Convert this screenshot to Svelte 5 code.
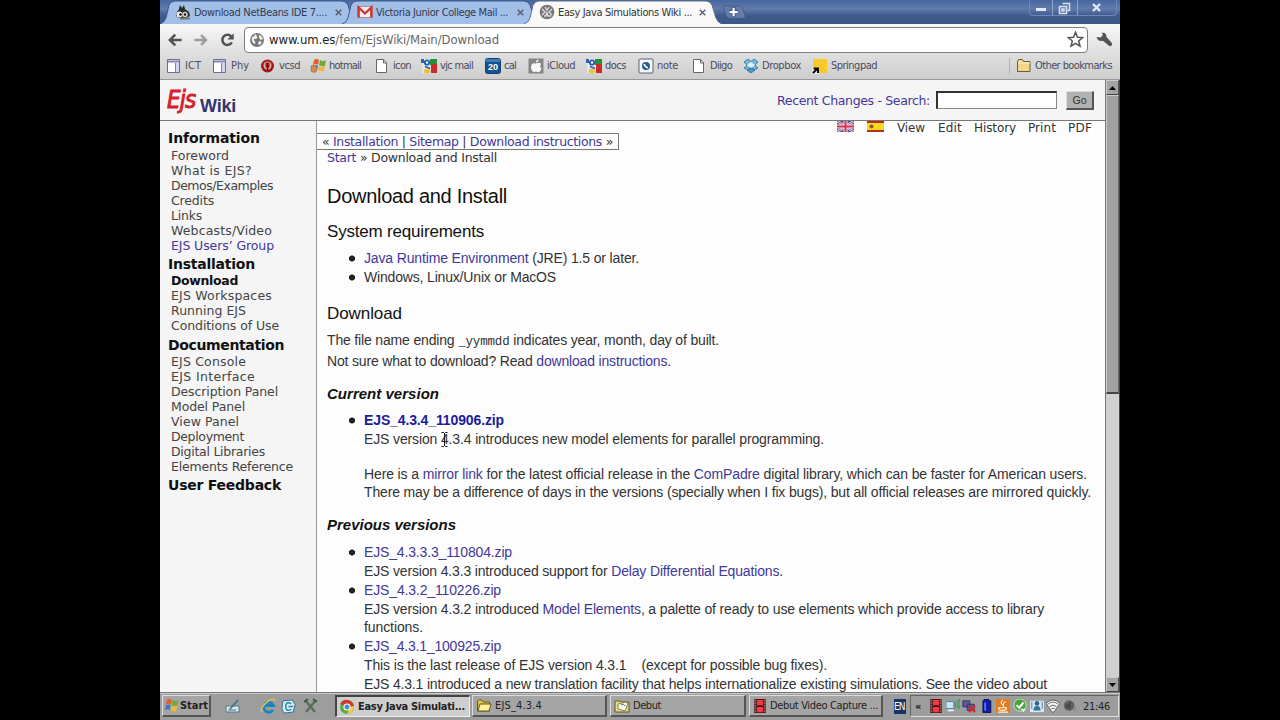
<script>
  // Sets letter-spacing so that a run of text takes up the given width.
  function fit(node, width) {
    const natural = node.getBoundingClientRect().width;
    node.style.letterSpacing = `${(width - natural) / node.textContent.length}px`;
  }

  const tabs = [
    { icon: 'duke', label: 'Download NetBeans IDE 7....', width: 133 },
    { icon: 'gmail', label: 'Victoria Junior College Mail ...', width: 132 },
    { icon: 'sim', label: 'Easy Java Simulations Wiki ...', width: 134, active: true }
  ];

  const bookmarks = [
    { icon: 'page', label: 'ICT', slot: 46, width: 16 },
    { icon: 'page', label: 'Phy', slot: 48, width: 18 },
    { icon: 'crest', label: 'vcsd', slot: 50, width: 21 },
    { icon: 'hotmail', label: 'hotmail', slot: 64, width: 32 },
    { icon: 'file', label: 'icon', slot: 47, width: 18 },
    { icon: 'google', label: 'vjc mail', slot: 64, width: 33 },
    { icon: 'cal', label: 'cal', slot: 43, width: 12 },
    { icon: 'apple', label: 'iCloud', slot: 58, width: 28 },
    { icon: 'google', label: 'docs', slot: 52, width: 21 },
    { icon: 'note', label: 'note', slot: 53, width: 21 },
    { icon: 'file', label: 'Diigo', slot: 52, width: 22 },
    { icon: 'dropbox', label: 'Dropbox', slot: 69, width: 39 },
    { icon: 'spring', label: 'Springpad', slot: 80, width: 46 }
  ];

  const menu = [
    { title: 'Information', width: 92, items: [['Foreword', 58], ['What is EJS?', 81], ['Demos/Examples', 102], ['Credits', 43], ['Links', 31], ['Webcasts/Video', 101], ['EJS Users’ Group', 103, 'blue']] },
    { title: 'Installation', width: 87, items: [['Download', 67, 'current'], ['EJS Workspaces', 101], ['Running EJS', 75], ['Conditions of Use', 108]] },
    { title: 'Documentation', width: 116, items: [['EJS Console', 75], ['EJS Interface', 84], ['Description Panel', 107], ['Model Panel', 74], ['View Panel', 68], ['Deployment', 73], ['Digital Libraries', 94], ['Elements Reference', 122]] },
    { title: 'User Feedback', width: 113, items: [] }
  ];

  const actions = [['View', 28, 41], ['Edit', 24, 36], ['History', 42, 54], ['Print', 28, 40], ['PDF', 24, 24]];
  const tray = ['film', 'signal', 'offline', 'battery', 'java', 'shield', 'people', 'wifi', 'speaker'];
</script>

{#snippet icon(name, size = 16)}
  <svg class="icon" width={size} height={size} viewBox="0 0 16 16">
    {#if name === 'duke'}
      <path d="M2 8 4 5l1-4 2 3 2-3 1 4 4 3 1 4-4 2H4L1 12z" fill="#2b2b28" />
      <circle cx="4.500" cy="10.500" r="3" fill="#eee" /><circle cx="10" cy="10.500" r="2.700" fill="#ddd" />
      <circle cx="5.500" cy="10.500" r="1.300" fill="#111" /><circle cx="10" cy="10.500" r="1.200" fill="#111" />
      <path d="M5 14.500h10" stroke="#77756b" stroke-width="2" />
    {:else if name === 'gmail'}
      <path d="M.5 2.500h15v11H.5z" fill="#f5eeee" stroke="#ad8c8c" />
      <path d="M1.700 13.500V3.500L8 9.500l6.300-6v10" fill="none" stroke="#cf3434" stroke-width="2.300" />
    {:else if name === 'globe'}
      <circle cx="8" cy="8" r="7" fill="#777" />
      <path d="M3 5c2 0 2-2 4-3 0 2 2 2 1 4S4 6 5 8s2 2 1 4c-2 0-4-3-3-7zM10 3c2 0 3 2 4 4l-2 1-2-2zM10 9l3 1-2 3-2-1z" fill="#eee" />
    {:else if name === 'sim'}
      <circle cx="8" cy="8" r="7.300" fill="#777" />
      <path d="M3 5l3 3-3 3M13 5l-3 3 3 3M6 3l2 3 2-3M5 12h2l1-4 1 4h3" fill="none" stroke="#ddd" stroke-width="1.300" />
    {:else if name === 'page'}
      <path d="M1.500 1.500h12v13h-12z" fill="#fff" stroke="#6a6e94" />
      <path d="M2 3.500h11" stroke="#8385b0" stroke-width="2" />
      <path d="M9.500 5v9" stroke="#7e80ab" />
      <path d="M10 5h3v9h-3z" fill="#d3d3f3" />
    {:else if name === 'crest'}
      <circle cx="7.500" cy="8" r="6.500" fill="#a5161a" /><circle cx="7.500" cy="7.500" r="4" fill="#d9aca0" />
      <path d="M5.500 4.500h4v4l-2 3-2-3z" fill="#a5161a" /><path d="M7.500 5v8" stroke="#222" />
    {:else if name === 'windows'}
      <path d="M3 2q3-2 5 0L7 7Q5 5 2 7z" fill="#e65c2b" /><path d="M9 2q3 2 6 0l-1 6q-3 1-6-1z" fill="#72a93a" />
      <path d="M2 8q3-2 5 0l-1 5q-2-2-5 0z" fill="#3f79c4" /><path d="M8 8q3 2 6 0l-1 6q-3 1-6-1z" fill="#f0b934" />
    {:else if name === 'hotmail'}
      <path d="M4 2q3-2 5 0L8 7Q6 5 3 7z" fill="#e65c2b" /><path d="M10 2q3 2 6 0l-1 6q-3 1-6-1z" fill="#72a93a" />
      <path d="M3 8q3-2 5 0l-1 4q-2-2-5 0z" fill="#3f79c4" /><path d="M9 8q3 2 6 0l-1 5q-3 1-6-1z" fill="#f0b934" />
      <path d="M1 8q4-2 6 2l-1 4q-3 1-5-1z" fill="#d98a46" stroke="#8f684e" stroke-width=".6" />
    {:else if name === 'file'}
      <path d="M2.500 1.500h7l3 3.500v9.500h-10z" fill="#fff" stroke="#666" /><path d="M9.500 1.500V5h3" fill="none" stroke="#666" />
    {:else if name === 'google'}
      <path d="M1 1h14v14H1z" fill="#e8e8e8" /><path d="M9 1h7v6H9z" fill="#23913b" /><path d="M10 6h6v9h-6z" fill="#cc2b2b" />
      <path d="M0 1h3v4H0z" fill="#2e62b3" /><circle cx="6" cy="4.500" r="2.200" fill="#fff" stroke="#235aab" stroke-width="1.800" />
      <path d="M4 8.500l5 2" stroke="#245cb0" stroke-width="1.800" /><ellipse cx="6" cy="13" rx="3.500" ry="2.200" fill="#eac343" />
    {:else if name === 'cal'}
      <rect x=".5" y=".5" width="15" height="15" rx="2" fill="#17528f" stroke="#123f70" />
      <path d="M1 1h14v3H1z" fill="#3a7db9" /><text x="3" y="12" class="cal-day">20</text>
    {:else if name === 'apple'}
      <path d="M.5.500h15v15H.5z" fill="#858585" />
      <path d="M8 5.500q5-2 5 1-2 2 .5 4-2 5-4 3.500-2-1-3 0-3 0-3.500-4.500 0-5.500 5-4zM8 4.500q0-3 2.500-3 0 3-2.500 3z" fill="#f7f7f7" />
    {:else if name === 'note'}
      <rect x="1" y="1" width="14" height="14" rx="1" fill="#f6f8fb" stroke="#59626f" />
      <circle cx="8" cy="8" r="4" fill="#245c94" /><path d="M6 6q1 3 4 4" stroke="#fff" stroke-width="1.800" fill="none" />
    {:else if name === 'dropbox'}
      <path d="M1 4l4-3 3 2.500L11 1l4 3-3 3 3 3-4 2-3-2-3 2-4-2 3-3z" fill="#78b5dc" stroke="#28709e" stroke-width=".8" />
      <path d="M4 7l4-3 4 3-4 3z" fill="#e4f3fb" /><path d="M4 12l4 3 4-3-4-2z" fill="#4c96c8" stroke="#28709e" stroke-width=".8" />
    {:else if name === 'spring'}
      <path d="M1 1h14v14H1z" fill="#f9ca27" /><path d="M0 9.500h7V16H0z" fill="#eee" />
      <path d="M1 15l4-4M1.500 10.500h4.500v4.500" stroke="#000" stroke-width="2" fill="none" />
    {:else if name === 'folder'}
      <path d="M1.500 3.500l1-2h4l1 2h6.500v10H1.500z" fill="#f5d48b" stroke="#6d5b39" /><path d="M2 5h12" stroke="#fff0c5" />
    {:else if name === 'star'}
      <path d="M8 1.200l1.900 4.700 4.900.3-3.800 3.200 1.300 4.900L8 11.600l-4.300 2.700L5 9.400 1.200 6.200l4.900-.3z" fill="#fff" stroke="#555" stroke-width="1.400" />
    {:else if name === 'wrench'}
      <path d="M.5 5l4 .5L7 3 5.500.8Q10.500 0 10.500 5l4.500 5q2 2 .5 3.500-1.500 1.500-3.500-.5L7 8.800Q2 10 .5 5z" fill="#505459" />
    {:else if name === 'yellowfolder'}
      <path d="M1.500 3l2-1.500 3 1 1 1.500h6v9h-12z" fill="#d9c44c" stroke="#65591e" /><path d="M2 13l2-7h11l-2 7z" fill="#fff19a" stroke="#65591e" />
    {:else if name === 'debut'}
      <path d="M1 3h5l1 1h8v10H1z" fill="#eadc8a" stroke="#62551d" /><path d="M4 6l8-2 2 2-3 7-7-2z" fill="#f4f6ee" stroke="#85824c" /><path d="M7 7q3-2 4 1" fill="none" stroke="#4d785f" />
    {:else if name === 'film'}
      <path d="M1.500 0h13v16h-13z" fill="#4a1717" /><path d="M4.500 1h7v6h-7zM4.500 9h7v6h-7z" fill="#ee3b43" />
      <path d="M3 1v15M13 1v15" stroke="#e9a9a9" stroke-dasharray="1.500 1.500" />
    {:else if name === 'chrome'}
      <circle cx="8" cy="8" r="7" fill="#58ab46" /><path d="M1 5Q4 0 9 1q5 1 6 6H8z" fill="#cf3a2e" />
      <path d="M15 7q0 7-7 8l3-7z" fill="#f3cf3c" /><circle cx="8" cy="8" r="3.600" fill="#fff" /><circle cx="8" cy="8" r="2.500" fill="#4b8bd1" />
    {:else if name === 'desktop'}
      <path d="M1 8h13v6H1z" fill="#d9e9ed" stroke="#557886" /><path d="M5 11l8-9" stroke="#436a7d" stroke-width="1.500" /><path d="M3 12h8" stroke="#3c6c89" />
    {:else if name === 'ie'}
      <path d="M13 12A5 5 0 1 1 13.500 7.500H5" fill="none" stroke="#1d83bd" stroke-width="2.800" /><path d="M2 14C-2 9 14-3 15 3" fill="none" stroke="#e3c24d" stroke-width="1.300" />
    {:else if name === 'outlook'}
      <path d="M2 2l10-1 3 5-2 8-10 1-2-5z" fill="#d8edf3" stroke="#366c88" /><path d="M11 5Q5 2 5 8t6 3M8 8h5" fill="none" stroke="#2789b4" stroke-width="1.600" />
    {:else if name === 'tools'}
      <path d="M2 2l10 12M13 2L3 14" stroke="#58715d" stroke-width="2.600" /><path d="M1 4l4-3M10 1l4 3" stroke="#435847" stroke-width="1.600" />
    {:else if name === 'signal'}
      <rect x="0" y="3" width="9" height="8" fill="#cbe6ee" stroke="#467b9a" /><path d="M2 13h7" stroke="#e5f4f5" stroke-width="2" />
      <path d="M10 4q2 2 0 5M12 2q4 4 0 8M14 0q5 6 0 11" stroke="#3a9b54" fill="none" stroke-width="1.400" />
    {:else if name === 'offline'}
      <path d="M1 2h8v7H1zM6 6h8v7H6z" fill="#5a5b9a" stroke="#333461" /><path d="M8 8l7 7M15 8l-7 7" stroke="#dc2727" stroke-width="2.400" />
    {:else if name === 'battery'}
      <path d="M6 0h5v2h2.500v13.500h-9V2H6z" fill="#121ab0" stroke="#070b4e" /><path d="M7 4v9" stroke="#4e83ed" stroke-width="2" />
    {:else if name === 'java'}
      <path d="M0 0h16v16H0z" fill="#e37b22" /><path d="M8 1Q4 4 7 6t1 3M11 3Q7 5 9 8M3 10h9q0 3-3 3H6q-3 0-3-3zM2 15h12" stroke="#fff1d9" fill="none" stroke-width="1.200" />
    {:else if name === 'shield'}
      <circle cx="8" cy="7" r="7" fill="#46a53b" stroke="#d6edca" /><path d="M4 7l3 3 5-6" fill="none" stroke="#fff" stroke-width="2.300" /><path d="M8 11h7l-3 4z" fill="#e8edf0" />
    {:else if name === 'people'}
      <path d="M0 2h16v13H0z" fill="#d5e7f1" /><circle cx="8" cy="5" r="2.600" fill="#2f6387" /><path d="M4 13q0-5 4-5t4 5z" fill="#3c7197" /><path d="M2 3v8M14 3v8" stroke="#6d9bbb" stroke-width="1.500" />
    {:else if name === 'wifi'}
      <path d="M0 5q8-8 16 0L9 15H7z" fill="#f4f4f4" stroke="#555" /><path d="M2 6q6-5 12 0M4 8.500q4-3 8 0M6 11q2-1 4 0" fill="none" stroke="#555" />
    {:else if name === 'speaker'}
      <circle cx="7" cy="7.500" r="6" fill="#606060" /><path d="M3 6h3l3-3v9L6 10H3z" fill="#484848" /><path d="M12 8q4 2 1 6" fill="none" stroke="#777" />
    {/if}
  </svg>
{/snippet}

<div class="stage">
  <div class="screen">
    <div class="tabstrip">
      {#each tabs as tab}
        <div class="tab" class:active={tab.active}>
          <svg class="tab-shape" viewBox="0 0 198 24" width="198" height="24">
            <path d="M0 24Q4 23 6 18L9 5Q11 1 15 1H182Q186 1 188 5L192 18Q194 23 198 24" />
          </svg>
          {@render icon(tab.icon)}
          <span class="tab-label"><span class="run" use:fit={tab.width}>{tab.label}</span></span>
          <svg class="close" width="7" height="7" viewBox="0 0 7 7"><path d="M.7.700l5.600 5.600M6.300.700L.7 6.300" /></svg>
        </div>
      {/each}
      <svg class="new-tab" width="24" height="15" viewBox="0 0 29 17">
        <path d="M1 2Q1 .5 3 .5h18q3 0 4 3l3 9q1 3-2 3H9q-3 0-4-3z" fill="#647ba8" stroke="#3f5888" />
        <path d="M14 2.500v11M8.500 8h11" stroke="#334671" stroke-width="4.500" /><path d="M14 3v10M9 8h10" stroke="#fff" stroke-width="2.600" />
      </svg>
      <div class="window-buttons">
        <span><svg width="22" height="16"><path d="M6 9.500h10" stroke="#e0eafa" stroke-width="3" /></svg></span>
        <span><svg width="24" height="16"><path d="M9.500 3.500h7v7h-2M6.500 6.500h7v7h-7zM9 9h2v2H9z" fill="none" stroke="#d7e2f4" stroke-width="1.500" /></svg></span>
        <span><svg width="38" height="16"><path d="M15 4l7 7M22 4l-7 7" stroke="#e0eafa" stroke-width="2.300" /></svg></span>
      </div>
    </div>

    <div class="toolbar">
      <svg class="nav" width="80" height="20" viewBox="0 0 80 20">
        <path d="M16 10H4.500M9.500 4.500L4 10l5.500 5.500" fill="none" stroke="#505357" stroke-width="2.700" />
        <path d="M29 10h11M36 5l5 5-5 5" fill="none" stroke="#999b9e" stroke-width="2.500" />
        <path d="M67 6.500A5.200 5.200 0 1 0 67.500 12.500" fill="none" stroke="#505357" stroke-width="2.600" /><path d="M69.500 3v6.500H63z" fill="#505357" />
      </svg>
      <div class="omnibox">
        {@render icon('globe')}
        <span class="url"><span class="run" use:fit={230}><b>www.um.es</b>/fem/EjsWiki/Main/Download</span></span>
        {@render icon('star', 17)}
      </div>
      <div class="wrench">{@render icon('wrench')}</div>
    </div>

    <div class="bookmarks">
      {#each bookmarks as mark}
        <div class="bookmark" style:width="{mark.slot}px">
          {@render icon(mark.icon)}<span class="run" use:fit={mark.width}>{mark.label}</span>
        </div>
      {/each}
      <div class="bookmark other">{@render icon('folder')}<span class="run" use:fit={77}>Other bookmarks</span></div>
    </div>

    <div class="viewport">
      <div class="page">
        <header>
          <div class="logo"><span class="ejs">Ejs</span><span class="wiki">Wiki</span></div>
          <div class="search">
            <span class="run" use:fit={153}><a>Recent Changes</a> - <a>Search:</a></span>
            <div class="field"></div>
            <div class="go">Go</div>
          </div>
        </header>
        <div class="columns">
          <nav class="sidebar">
            {#each menu as group}
              <h4><span class="run" use:fit={group.width}>{group.title}</span></h4>
              {#each group.items as [label, width, kind]}
                <div class="entry {kind ?? ''}"><span class="run" use:fit={width}>{label}</span></div>
              {/each}
            {/each}
          </nav>
          <main>
            <div class="actions">
              <svg class="flag" width="17" height="11" viewBox="0 0 17 11">
                <path d="M0 0h17v11H0z" fill="#4854a0" /><path d="M0 0l17 11M17 0L0 11" stroke="#e5d5e5" stroke-width="2.500" /><path d="M0 0l17 11M17 0L0 11" stroke="#c34a66" />
                <path d="M8.500 0v11M0 5.500h17" stroke="#f0e2ea" stroke-width="4" /><path d="M8.500 0v11M0 5.500h17" stroke="#cc3455" stroke-width="2" />
              </svg>
              <svg class="flag" width="17" height="11" viewBox="0 0 17 11">
                <path d="M0 0h17v11H0z" fill="#b92b1c" /><path d="M0 2h17v7H0z" fill="#f6da22" /><circle cx="4.500" cy="5.500" r="2" fill="#8d591d" />
              </svg>
              {#each actions as [label, width, slot]}
                <span class="action" style:width="{slot}px"><span class="run" use:fit={width}>{label}</span></span>
              {/each}
            </div>
            <div class="trail"><span class="run" use:fit={291}>« <a>Installation</a> | <a>Sitemap</a> | <a>Download instructions</a> »</span></div>
            <div class="crumb"><span class="run" use:fit={170}><a>Start</a> » Download and Install</span></div>
            <article>
              <h1><span class="run" use:fit={180}>Download and Install</span></h1>
              <h2><span class="run" use:fit={157}>System requirements</span></h2>
              <ul>
                <li><span class="run" use:fit={275}><a>Java Runtime Environment</a> (JRE) 1.5 or later.</span></li>
                <li><span class="run" use:fit={192}>Windows, Linux/Unix or MacOS</span></li>
              </ul>
              <h2 class="download"><span class="run" use:fit={75}>Download</span></h2>
              <p><span class="run" use:fit={392}>The file name ending <code>_yymmdd</code> indicates year, month, day of built.</span></p>
              <p class="second-line"><span class="run" use:fit={344}>Not sure what to download? Read <a>download instructions</a>.</span></p>
              <h3><span class="run" use:fit={112}>Current version</span></h3>
              <ul>
                <li>
                  <div class="line"><span class="run strong" use:fit={140}><a>EJS_4.3.4_110906.zip</a></span></div>
                  <div class="line"><span class="run" use:fit={460}>EJS version 4.3.4 introduces new model elements for parallel programming.</span>
                    <svg class="caret" width="7" height="15" viewBox="0 0 7 15"><path d="M.5.500h2l1 1 1-1h2M3.500 1v13M.5 14.500h2l1-1 1 1h2" fill="none" stroke="#111" /></svg>
                  </div>
                  <div class="line gap"><span class="run" use:fit={723}>Here is a <a>mirror link</a> for the latest official release in the <a>ComPadre</a> digital library, which can be faster for American users.</span></div>
                  <div class="line"><span class="run" use:fit={727}>There may be a difference of days in the versions (specially when I fix bugs), but all official releases are mirrored quickly.</span></div>
                </li>
              </ul>
              <h3 class="previous"><span class="run" use:fit={129}>Previous versions</span></h3>
              <ul>
                <li>
                  <div class="line"><span class="run" use:fit={148}><a>EJS_4.3.3.3_110804.zip</a></span></div>
                  <div class="line"><span class="run" use:fit={419}>EJS version 4.3.3 introduced support for <a>Delay Differential Equations</a>.</span></div>
                </li>
                <li>
                  <div class="line"><span class="run" use:fit={137}><a>EJS_4.3.2_110226.zip</a></span></div>
                  <div class="line"><span class="run" use:fit={680}>EJS version 4.3.2 introduced <a>Model Elements</a>, a palette of ready to use elements which provide access to library</span></div>
                  <div class="line"><span class="run" use:fit={59}>functions.</span></div>
                </li>
                <li>
                  <div class="line"><span class="run" use:fit={137}><a>EJS_4.3.1_100925.zip</a></span></div>
                  <div class="line"><span class="run" use:fit={463}>This is the last release of EJS version 4.3.1 &nbsp;&nbsp; (except for possible bug fixes).</span></div>
                  <div class="line"><span class="run" use:fit={683}>EJS 4.3.1 introduced a new translation facility that helps internationalize existing simulations. See the video about</span></div>
                </li>
              </ul>
            </article>
          </main>
        </div>
      </div>
      <div class="scrollbar">
        <div class="arrow"><svg width="7" height="4"><path d="M3.500 0L7 4H0z" /></svg></div>
        <div class="thumb"></div>
        <div class="track"></div>
        <div class="arrow"><svg width="7" height="4"><path d="M0 0h7L3.500 4z" /></svg></div>
      </div>
    </div>

    <div class="taskbar">
      <div class="task start">{@render icon('windows', 15)}<span class="run" use:fit={28}>Start</span></div>
      <div class="quick">
        {@render icon('desktop')}{@render icon('ie')}{@render icon('outlook', 15)}{@render icon('tools')}
      </div>
      <div class="task pressed">{@render icon('chrome')}<span class="run" use:fit={107}>Easy Java Simulati...</span></div>
      <div class="task second">{@render icon('yellowfolder')}<span class="run" use:fit={47}>EJS_4.3.4</span></div>
      <div class="task third">{@render icon('debut')}<span class="run" use:fit={28}>Debut</span></div>
      <div class="task fourth">{@render icon('film', 14)}<span class="run" use:fit={108}>Debut Video Capture ...</span></div>
      <div class="language">EN</div>
      <div class="tray">
        <span class="chevron">«</span>
        {#each tray as item}{@render icon(item, 14)}{/each}
        <span class="run clock" use:fit={27}>21:46</span>
      </div>
    </div>
  </div>
</div>

<style>
  :global(body) { background: #000; overflow: hidden; }
  .stage { width: 1280px; height: 720px; background: #000; display: flex; justify-content: center; overflow: hidden; }
  .screen { width: 960px; height: 720px; display: flex; flex-direction: column; font: 11px "DejaVu Sans Condensed", "DejaVu Sans", sans-serif; color: #333; overflow: hidden; }
  .screen *, .screen { box-sizing: border-box; }
  .run { display: inline-block; white-space: pre; vertical-align: top; }
  .icon { flex: none; display: block; }

  .tabstrip { height: 24px; flex: none; display: flex; padding-left: 6px; background: linear-gradient(#46669f, #607bac 35%, #3f5a8c 65%, #3d5685); }
  .tab { position: relative; width: 182px; height: 24px; display: flex; align-items: center; padding-left: 9px; font-size: 11px; color: #333b4c; flex: none; }
  .tab.active { z-index: 1; color: #333; }
  .tab-shape { position: absolute; left: -6px; top: 0; }
  .tab-shape path { fill: #a2bfea; stroke: #3d5886; }
  .active .tab-shape path { fill: #f9f9f9; stroke: #5b6d8c; }
  .tab .icon, .tab-label, .close { position: relative; }
  .tab-label { width: 141px; margin-left: 3px; flex: none; }
  .close { stroke: #555b66; stroke-width: 1.3; }
  .new-tab { margin: 5px 0 0 10px; }
  .window-buttons { display: flex; height: 16px; margin-left: auto; margin-right: 3px; border: 1px solid #6d88b8; border-top: 0; border-radius: 0 0 4px 4px; overflow: hidden; }
  .window-buttons span + span { border-left: 1px solid #8ba5d1; }
  .window-buttons svg { display: block; }

  .toolbar { height: 30px; flex: none; display: flex; align-items: center; background: linear-gradient(#f8f8f8, #dedede); padding: 1px 0 0 6px; }
  .nav { width: 78px; height: 20px; }
  .omnibox { width: 844px; height: 26px; display: flex; align-items: center; background: #fff; border: 1px solid #7e7e7e; border-radius: 4px; padding: 0 3px 0 4px; }
  .url { flex: 1; margin-left: 4px; font: 13px "DejaVu Sans Condensed", sans-serif; color: #666; }
  .url b { font-weight: normal; color: #222; }
  .wrench { margin-left: 8px; }

  .bookmarks { height: 26px; flex: none; display: flex; align-items: center; padding: 0 0 2px 6px; background: linear-gradient(#dfdfdf, #cdcdcd); border-bottom: 1px solid #999; color: #4b4b5c; font-size: 11px; }
  .bookmark { display: flex; align-items: center; gap: 3px; flex: none; }
  .other { margin-left: auto; padding-left: 6px; margin-right: 8px; border-left: 1px solid #b0b0b0; }

  .viewport { height: 612px; flex: none; display: flex; background: #fdfdfd; }
  .page { width: 945px; height: 612px; overflow: hidden; font: 13px "DejaVu Sans", sans-serif; }
  header { height: 41px; background: #f5f5f5; border-bottom: 1px solid #777; display: flex; justify-content: space-between; align-items: center; }
  .logo { padding-left: 7px; height: 40px; white-space: nowrap; display: flex; }
  .ejs { font: italic 24px/41px "DejaVu Sans Condensed", sans-serif; -webkit-text-stroke: .9px #d2222d; color: #d2222d; letter-spacing: -.8px; width: 33px; }
  .wiki { font: bold 18px/40px "Liberation Sans", sans-serif; color: #333370; padding-top: 6px; letter-spacing: -.2px; }
  a { color: #42389a; }
  .search { display: flex; align-items: center; padding-right: 11px; color: #42389a; font-size: 12.500px; }
  .field { width: 121px; height: 18px; margin-left: 6px; background: #fff; border: 2px solid #333; border-right: 1px solid #888; border-bottom: 1px solid #888; }
  .go { width: 28px; height: 19px; margin-left: 9px; background: #b1b1b1; border: 1px solid #ddd; border-right: 2px solid #555; border-bottom: 2px solid #555; font: 10.500px/16px "Liberation Sans", sans-serif; text-align: center; color: #333; }
  .columns { height: 571px; display: flex; }
  .sidebar { width: 157px; flex: none; border-right: 1px solid #999; background: #f5f5f5; padding: 7px 0 0 8px; }
  h4 { font: bold 14px/20px "DejaVu Sans", sans-serif; height: 19.500px; margin: 0; color: #111; }
  .entry { line-height: 15px; padding-left: 3px; height: 15px; color: #444; font-size: 12.500px; }
  .entry.blue { color: #42389a; }
  .entry.current { font-weight: bold; color: #111; }
  .entry + h4 { margin-top: 1.300px; }

  main { flex: 1; color: #333; }
  .actions { height: 12px; display: flex; justify-content: flex-end; padding-right: 13px; font-size: 12px; line-height: 15px; }
  .flag { margin-right: 13px; }
  .action { flex: none; }
  .trail { width: 302px; height: 17px; border: 1px solid #777; border-left: 0; line-height: 15px; padding-left: 5px; font-size: 12.500px; }
  .crumb { height: 16px; padding-left: 10px; line-height: 16px; font-size: 12.500px; }
  article { padding-left: 10px; font: 14px/18.75px "Liberation Sans", sans-serif; }
  h1 { font-size: 20px; font-weight: normal; line-height: 24px; margin: 18px 0 0; color: #111; }
  h2 { font-size: 17px; font-weight: normal; line-height: 20px; margin: 14px 0 7px; color: #111; }
  h2.download { margin: 17px 0 6px; }
  h3 { font-size: 15px; font-style: italic; line-height: 20px; margin: 12.500px 0 7.500px; color: #111; }
  h3.previous { margin: 13.200px 0 8px; }
  p { margin: 0; line-height: 20.500px; }
  .second-line { margin-top: .7px; }
  ul { margin: 0; padding: 0; list-style: none; }
  li { padding-left: 37px; background: radial-gradient(circle at 25px 9.500px, #222 2.700px, transparent 3.400px); }
  .line { height: 18.75px; position: relative; white-space: nowrap; }
  .gap { margin-top: 16px; }
  .strong { font-weight: bold; }
  .strong a { color: #1c1c9f; }
  code { font: 12.500px "Liberation Mono", monospace; line-height: 1; }
  .caret { position: absolute; left: 77px; top: 2px; }

  .scrollbar { width: 15px; display: flex; flex-direction: column; background: #8c8c8c; border-left: 1px solid #777; border-right: 1px solid #444; }
  .arrow { height: 15px; flex: none; background: #a4a4a4; border: 1px solid #ccc; border-right-color: #555; border-bottom-color: #444; display: grid; place-items: center; }
  .thumb { height: 299px; background: #a1a1a1; border: 1px solid #ccc; border-right-color: #666; border-bottom: 2px solid #444; }
  .track { flex: 1; background: #d0d0d0; }

  .taskbar { height: 28px; flex: none; display: flex; align-items: flex-start; padding: 2px 1px 0 2px; background: #9d9d9d; border-top: 1px solid #777; box-shadow: inset 0 1px #c8c8c8; color: #222; font-size: 11px; }
  .task { height: 22px; flex: none; display: flex; align-items: center; gap: 3px; border: 1px solid #ddd; border-right: 2px solid #555; border-bottom: 2px solid #555; background: #a5a5a5; padding-left: 3px; }
  .start { width: 49px; padding-left: 1px; gap: 1px; font-weight: bold; }
  .quick { width: 124px; flex: none; display: flex; align-items: center; height: 22px; padding-left: 14px; }
  .quick .icon:nth-child(2) { margin-left: 19px; }
  .quick .icon:nth-child(3) { margin-left: 5px; }
  .quick .icon:nth-child(4) { margin-left: 7px; }
  .pressed { width: 135px; background: #cecece; border: 2px solid #444; border-right: 1px solid #eee; border-bottom: 1px solid #eee; font-weight: bold; padding-left: 2px; }
  .second { width: 135px; margin-left: 2px; }
  .third { width: 136px; margin-left: 3px; }
  .fourth { width: 134px; margin-left: 3px; }
  .language { width: 12px; height: 15px; margin: 4px 0 0 11px; background: #173467; color: #fff; font: 10px/15px "DejaVu Sans Condensed", sans-serif; overflow: hidden; letter-spacing: -1px; }
  .tray { flex: 1; height: 22px; margin-left: 4px; display: flex; align-items: center; gap: 2.800px; padding-left: 4px; border: 1px solid #666; border-right-color: #ddd; border-bottom-color: #ddd; }
  .chevron { width: 11px; font-weight: bold; color: #111; }
  .clock { margin-left: 3px; }
  .cal-day { font: bold 9px "Liberation Sans", sans-serif; fill: #fff; }
</style>
